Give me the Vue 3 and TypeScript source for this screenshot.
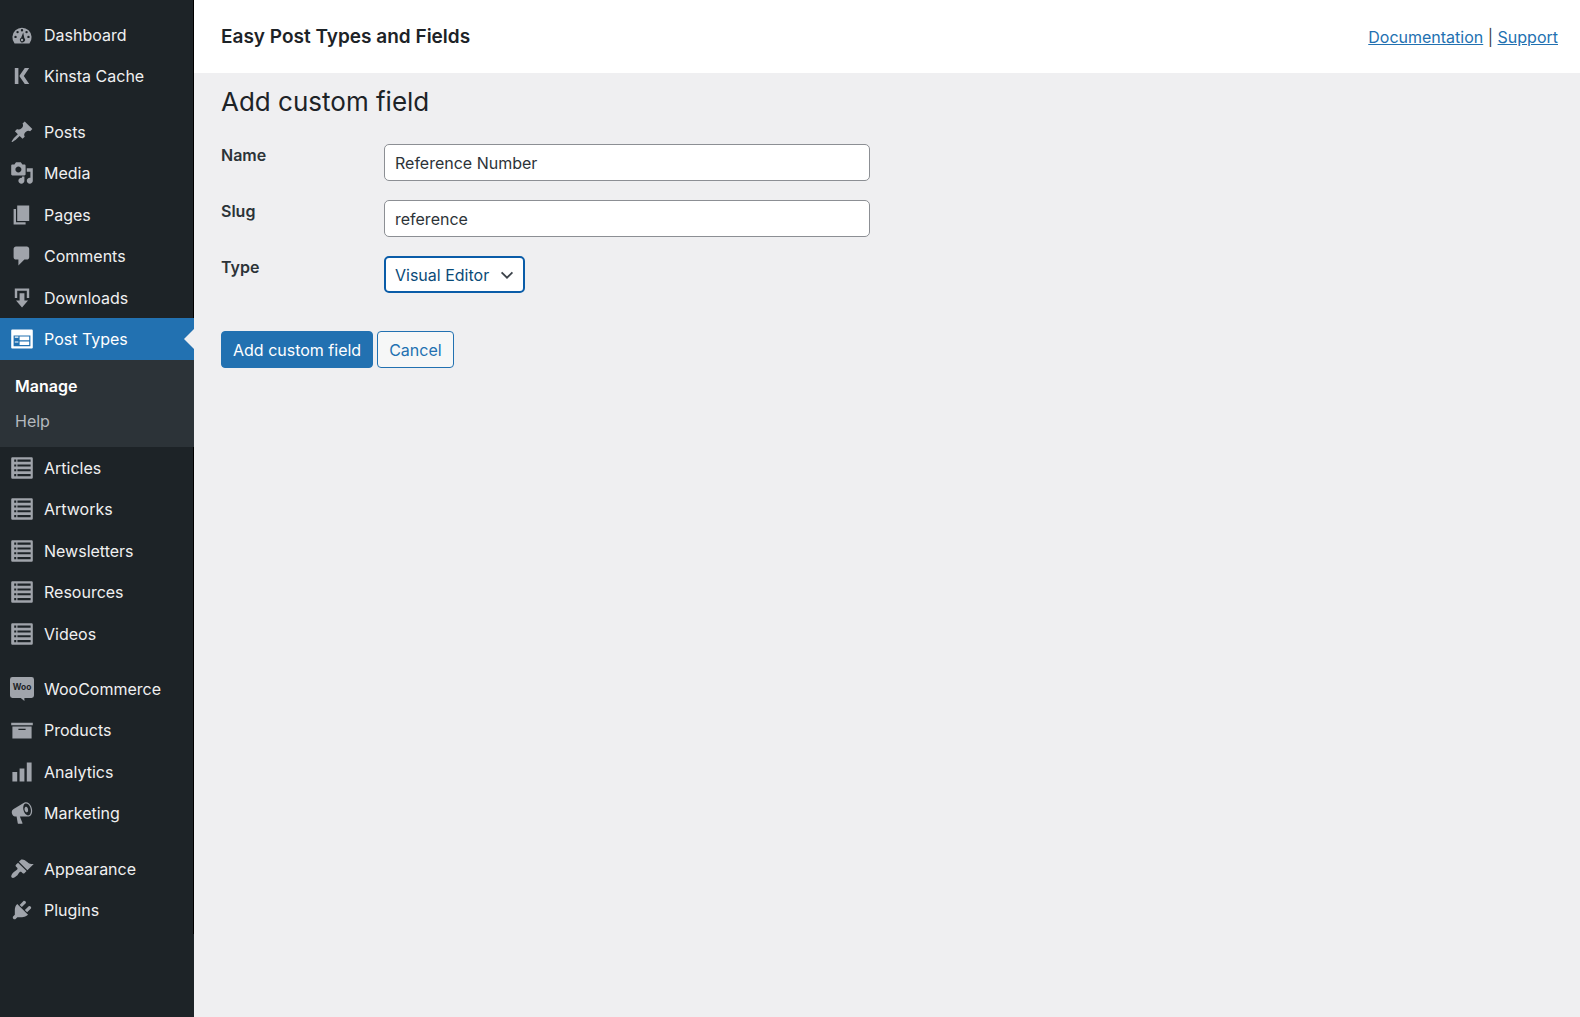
<script setup lang="ts">
import { ref } from 'vue'

interface MenuItem {
  label: string
  icon: string
  current?: boolean
  children?: { label: string; current?: boolean }[]
}

const icons: Record<string, string> = {
  dashboard:
    'M3.8 17h12.4A8 8 0 1 0 3.8 17zM10 5a1 1 0 1 1 0 2 1 1 0 0 1 0-2zM6.3 6.6a1 1 0 1 1 0 2 1 1 0 0 1 0-2zM13.8 6.6a1 1 0 1 1 0 2 1 1 0 0 1 0-2zM4.6 10.6a1 1 0 1 1 0 2 1 1 0 0 1 0-2zM15.4 10.6a1 1 0 1 1 0 2 1 1 0 0 1 0-2zM11 8l.9 4.6a2.1 2.1 0 1 1-2.6-.3zM10 13.2a1 1 0 1 0 0 2 1 1 0 0 0 0-2z',
  kinsta: 'M4 3.300h3v13.400H4zM12.300 3.300h3.700l-4.500 6.700 4.500 6.700h-3.700L8 10.500v-1z',
  posts:
    'M10.44 3.02l1.82-1.82 6.36 6.35-1.83 1.82c-1.05-.68-2.48-.57-3.41.36l-.75.75c-.92.93-1.04 2.35-.35 3.41l-1.83 1.82-2.41-2.41-2.8 2.79c-.42.42-3.38 2.71-3.8 2.29s1.86-3.39 2.28-3.81l2.79-2.79L4.1 9.36l1.83-1.82c1.05.69 2.48.57 3.4-.36l.75-.75c.93-.92 1.05-2.35.36-3.41z',
  media:
    'M13 11V4c0-.55-.45-1-1-1h-1.67L9 1H5L3.67 3H2c-.55 0-1 .45-1 1v7c0 .55.45 1 1 1h10c.55 0 1-.45 1-1zM7 4.5c1.38 0 2.5 1.12 2.5 2.5S8.38 9.5 7 9.5 4.5 8.38 4.5 7 5.62 4.5 7 4.5zM14 6h5v10.5c0 1.38-1.12 2.5-2.5 2.5S14 17.88 14 16.5s1.12-2.5 2.5-2.5c.17 0 .34.02.5.05V9h-3V6zm-4 8.05V13h2v3.5c0 1.38-1.12 2.5-2.5 2.5S7 17.88 7 16.5 8.12 14 9.5 14c.17 0 .34.02.5.05z',
  pages: 'M6 15V2h10v13H6zm-1 1h8v2H3V5h2v11z',
  comments:
    'M5 2h9c1.1 0 2 .9 2 2v7c0 1.1-.9 2-2 2h-2l-5 5v-5H5c-1.1 0-2-.9-2-2V4c0-1.1.9-2 2-2z',
  downloads: 'M14.01 4v6h2V2H4v8h2.01V4h8zm-2 2v6h3l-5 6-5-6h3V6h4z',
  types:
    'M2 2h16c.55 0 1 .45 1 1v14c0 .55-.45 1-1 1H2c-.55 0-1-.45-1-1V3c0-.55.45-1 1-1zm15 14V7H3v9h14zM4 8v1h3V8H4zm4 0v3h8V8H8zm-4 4v1h3v-1H4zm4 0v3h8v-3H8z',
  list: 'M2 1h16a1 1 0 0 1 1 1v16a1 1 0 0 1-1 1H2a1 1 0 0 1-1-1V2a1 1 0 0 1 1-1zM3.500 3v1.800h1.700V3zM6.200 3v1.800h11V3zM3.500 7v1.800h1.700V7zM6.200 7v1.800h11V7zM3.500 11v1.800h1.700V11zM6.200 11v1.800h11V11zM3.500 15v1.800h1.700V15zM6.200 15v1.800h11V15z',
  woo: 'M2 0h16a2 2 0 0 1 2 2v13.500a2 2 0 0 1-2 2h-6V20l-3-2.500H2a2 2 0 0 1-2-2V2a2 2 0 0 1 2-2z',
  products: 'M19 4v2H1V4h18zM2 7h16v10H2V7zm11 3V9H7v1h6z',
  analytics: 'M18 18V2h-4v16h4zm-6 0V7H8v11h4zm-6 0v-8H2v8h4z',
  marketing:
    'M18.15 5.94c.46 1.62.38 3.22-.02 4.48-.42 1.28-1.26 2.18-2.3 2.48-.16.06-.26.06-.4.06-.06.02-.12.02-.18.02-.06.02-.14.02-.22.02h-6.8l2.22 5.5c.02.14-.06.26-.14.34-.08.1-.24.16-.34.16H6.95c-.1 0-.26-.06-.34-.16-.08-.08-.16-.2-.14-.34l-1-5.5H4.25l-.02-.02c-.5.06-1.08-.18-1.54-.62s-.88-1.08-1.06-1.88c-.24-.8-.2-1.56-.02-2.2.18-.62.58-1.08 1.06-1.3l.02-.02 9-5.4c.1-.06.18-.1.24-.16.06-.04.14-.08.24-.12.16-.08.28-.12.5-.18 1.04-.3 2.24.1 3.22.98s1.84 2.24 2.26 3.86zm-2.58 5.98h-.02c.4-.1.74-.34 1.04-.7.58-.7.86-1.76.86-3.04 0-.64-.1-1.3-.28-1.98-.34-1.36-1.02-2.5-1.78-3.24s-1.68-1.1-2.46-.88c-.82.22-1.4.96-1.7 2-.32 1.04-.28 2.36.06 3.72.38 1.36 1 2.5 1.8 3.24.78.74 1.62 1.1 2.48.88zm-2.54-7.08c.22-.04.42-.02.62.04.38.16.76.48 1.02 1s.42 1.2.42 1.78c0 .3-.04.56-.12.8-.18.48-.44.84-.86.94-.34.1-.8-.06-1.14-.4s-.64-.86-.78-1.5c-.18-.62-.12-1.24.02-1.72s.48-.84.82-.94z',
  appearance:
    'M14.48 11.06L7.41 3.99l1.5-1.5c.5-.56 2.3-.47 3.51.32 1.21.8 1.43 1.28 2.91 2.1 1.18.64 2.45 1.26 4.45.85zm-.71.71L6.7 4.7 4.93 6.47c-.39.39-.39 1.02 0 1.41l1.06 1.06c.39.39.39 1.03 0 1.42-.6.6-1.43 1.11-2.21 1.69-.35.26-.7.53-1.01.84C1.43 14.23.4 16.08 1.4 17.07c.99 1 2.84-.03 4.18-1.36.31-.31.58-.66.85-1.02.57-.78 1.08-1.61 1.69-2.21.39-.39 1.02-.39 1.41 0l1.06 1.06c.39.39 1.02.39 1.41 0z',
  plugins:
    'M13.11 4.36L9.87 7.6 8 5.73l3.24-3.24c.35-.34 1.05-.2 1.56.32.52.51.66 1.21.31 1.55zm-8 1.77l.91-1.12 9.01 9.01-1.19.84c-.71.71-2.63 1.16-3.82 1.16H6.14L4.9 17.26c-.59.59-1.54.59-2.12 0-.59-.58-.59-1.53 0-2.12l1.24-1.24v-3.88c0-1.13.4-3.19 1.09-3.89zm7.26 3.97l3.24-3.24c.34-.35 1.04-.21 1.55.31.52.51.66 1.21.31 1.55l-3.24 3.25z',
}

const groups: MenuItem[][] = [
  [
    { label: 'Dashboard', icon: 'dashboard' },
    { label: 'Kinsta Cache', icon: 'kinsta' },
  ],
  [
    { label: 'Posts', icon: 'posts' },
    { label: 'Media', icon: 'media' },
    { label: 'Pages', icon: 'pages' },
    { label: 'Comments', icon: 'comments' },
    { label: 'Downloads', icon: 'downloads' },
    {
      label: 'Post Types',
      icon: 'types',
      current: true,
      children: [{ label: 'Manage', current: true }, { label: 'Help' }],
    },
    { label: 'Articles', icon: 'list' },
    { label: 'Artworks', icon: 'list' },
    { label: 'Newsletters', icon: 'list' },
    { label: 'Resources', icon: 'list' },
    { label: 'Videos', icon: 'list' },
  ],
  [
    { label: 'WooCommerce', icon: 'woo' },
    { label: 'Products', icon: 'products' },
    { label: 'Analytics', icon: 'analytics' },
    { label: 'Marketing', icon: 'marketing' },
  ],
  [
    { label: 'Appearance', icon: 'appearance' },
    { label: 'Plugins', icon: 'plugins' },
  ],
]

const name = ref('Reference Number')
const slug = ref('reference')
const type = ref('visual')
</script>

<template>
  <div class="admin">
    <aside class="sidebar">
      <nav class="menu" aria-label="Main menu">
        <ul v-for="(group, g) in groups" :key="g" class="group">
          <li v-for="item in group" :key="item.label" class="item">
            <a href="#" class="link" :class="{ current: item.current }">
              <svg class="icon" viewBox="0 0 20 20" aria-hidden="true">
                <path :d="icons[item.icon]" fill-rule="evenodd" />
                <text v-if="item.icon === 'woo'" class="woo" x="10" y="11" text-anchor="middle">Woo</text>
              </svg>
              <span>{{ item.label }}</span>
            </a>
            <ul v-if="item.children" class="submenu">
              <li v-for="child in item.children" :key="child.label">
                <a href="#" class="sublink" :class="{ active: child.current }">{{ child.label }}</a>
              </li>
            </ul>
          </li>
        </ul>
      </nav>
    </aside>

    <div class="content">
      <header class="topbar">
        <h1 class="brand">Easy Post Types and Fields</h1>
        <div class="help"><a href="#">Documentation</a> | <a href="#">Support</a></div>
      </header>

      <main class="page">
        <h2 class="title">Add custom field</h2>
        <form @submit.prevent>
          <div class="row">
            <label for="name">Name</label>
            <input id="name" v-model="name" class="control" type="text" />
          </div>
          <div class="row">
            <label for="slug">Slug</label>
            <input id="slug" v-model="slug" class="control" type="text" />
          </div>
          <div class="row">
            <label for="type">Type</label>
            <div class="select">
              <select id="type" v-model="type">
                <option value="visual">Visual Editor</option>
                <option value="text">Text</option>
              </select>
              <svg class="chevron" viewBox="0 0 20 20" aria-hidden="true">
                <path d="M4 7l6 6 6-6" />
              </svg>
            </div>
          </div>
          <div class="actions">
            <button type="submit" class="button primary">Add custom field</button>
            <button type="button" class="button">Cancel</button>
          </div>
        </form>
      </main>
    </div>
  </div>
</template>

<style>
body {
  margin: 0;
  background: #efeff1;
}
</style>

<style scoped>
.admin {
  display: flex;
  min-height: 100vh;
  font-family: Inter, 'Liberation Sans', sans-serif;
  font-size: 16px;
  color: #3c434a;
}

.admin * {
  box-sizing: border-box;
}

ul {
  margin: 0;
  padding: 0;
  list-style: none;
}

.sidebar {
  flex: none;
  width: 194px;
  background: #1d2327;
}

.menu {
  padding: 14px 0 3px;
  box-shadow: inset -1px 0 #000;
}

.group + .group {
  margin-top: 14px;
}

.link {
  position: relative;
  display: flex;
  align-items: center;
  gap: 10px;
  height: 41px;
  padding-left: 10px;
  color: #f0f0f1;
  text-decoration: none;
}

.item:nth-child(even) > .link {
  height: 42px;
}

.icon {
  flex: none;
  width: 24px;
  height: 24px;
  overflow: visible;
  fill: #a0a4ab;
}

.woo {
  font-size: 7px;
  font-weight: 700;
  fill: #1d2327;
}

.link.current {
  background: #2271b1;
  color: #fff;
}

.link.current .icon {
  fill: #fff;
}

.link.current::after {
  content: '';
  position: absolute;
  right: 0;
  top: 50%;
  margin-top: -10px;
  border: 10px solid transparent;
  border-left-width: 0;
  border-right-color: #efeff1;
}

.submenu {
  padding: 8px 0 9px;
  background: #2c3338;
}

.sublink {
  display: flex;
  align-items: center;
  height: 35px;
  padding-left: 15px;
  color: #b4b9be;
  text-decoration: none;
}

.sublink.active {
  color: #fff;
  font-weight: 600;
}

.content {
  flex: 1;
  min-width: 0;
}

.topbar {
  display: flex;
  align-items: center;
  justify-content: space-between;
  height: 73px;
  padding: 0 22px 0 27px;
  background: #fff;
}

.brand {
  margin: 0;
  font-size: 19px;
  font-weight: 600;
  color: #1d2327;
}

.help a {
  color: #2271b1;
}

.page {
  padding: 12px 27px;
}

.title {
  margin: 0 0 25px;
  font-size: 26px;
  font-weight: 400;
  line-height: 34px;
  color: #1d2327;
}

.row {
  display: flex;
  align-items: flex-start;
  margin-bottom: 19px;
}

.row label {
  flex: none;
  width: 163px;
  font-weight: 600;
  line-height: 22px;
  color: #2c3338;
}

.control {
  width: 486px;
  height: 37px;
  padding: 0 10px;
  border: 1px solid #8c8f94;
  border-radius: 5px;
  background: #fff;
  color: #2c3338;
  font: inherit;
}

.select {
  position: relative;
}

.select select {
  appearance: none;
  width: 141px;
  height: 37px;
  padding: 0 28px 0 9px;
  border: 2px solid #0a5ca8;
  border-radius: 5px;
  background: #fff;
  color: #0a4b78;
  font: inherit;
}

.chevron {
  position: absolute;
  right: 9px;
  top: 9px;
  width: 18px;
  height: 20px;
  fill: none;
  stroke: #3c434a;
  stroke-width: 2px;
  pointer-events: none;
}

.actions {
  display: flex;
  gap: 4px;
  padding-top: 19px;
}

.button {
  height: 37px;
  padding: 0 11px;
  border: 1px solid #2271b1;
  border-radius: 4px;
  background: #f6f7f7;
  color: #2271b1;
  font: inherit;
}

.button.primary {
  background: #2271b1;
  color: #fff;
}
</style>
